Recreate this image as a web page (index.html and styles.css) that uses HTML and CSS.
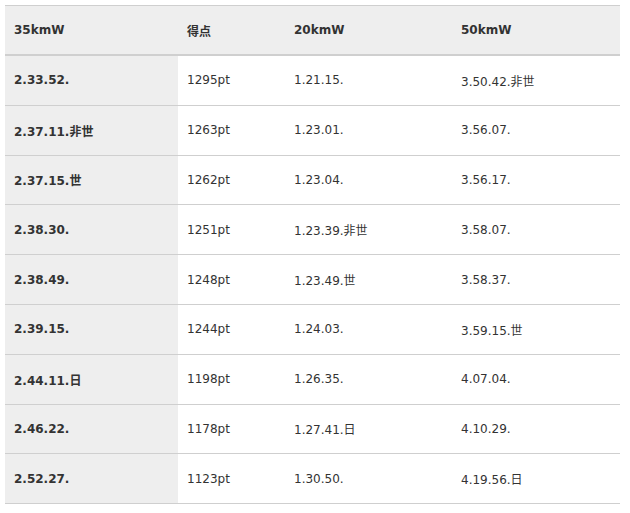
FILE: index.html
```html
<!DOCTYPE html>
<html lang="ja">
<head>
<meta charset="utf-8">
<title>記録表</title>
<link rel="stylesheet" href="styles.css">
</head>
<body>
<table class="records">
  <colgroup>
    <col class="c1"><col class="c2"><col class="c3"><col class="c4">
  </colgroup>
  <thead>
    <tr><th>35kmW</th><th>得点</th><th>20kmW</th><th>50kmW</th></tr>
  </thead>
  <tbody>
    <tr><th>2.33.52.</th><td>1295pt</td><td>1.21.15.</td><td>3.50.42.非世</td></tr>
    <tr><th>2.37.11.非世</th><td>1263pt</td><td>1.23.01.</td><td>3.56.07.</td></tr>
    <tr><th>2.37.15.世</th><td>1262pt</td><td>1.23.04.</td><td>3.56.17.</td></tr>
    <tr><th>2.38.30.</th><td>1251pt</td><td>1.23.39.非世</td><td>3.58.07.</td></tr>
    <tr><th>2.38.49.</th><td>1248pt</td><td>1.23.49.世</td><td>3.58.37.</td></tr>
    <tr><th>2.39.15.</th><td>1244pt</td><td>1.24.03.</td><td>3.59.15.世</td></tr>
    <tr><th>2.44.11.日</th><td>1198pt</td><td>1.26.35.</td><td>4.07.04.</td></tr>
    <tr><th>2.46.22.</th><td>1178pt</td><td>1.27.41.日</td><td>4.10.29.</td></tr>
    <tr><th>2.52.27.</th><td>1123pt</td><td>1.30.50.</td><td>4.19.56.日</td></tr>
  </tbody>
</table>
</body>
</html>
```

FILE: styles.css
```css
html, body {
  margin: 0;
  padding: 0;
  background: #fff;
}

body {
  padding: 5px 0 0 5px;
  font-family: "DejaVu Sans", Verdana, "Noto Sans CJK JP", sans-serif;
  font-size: 12px;
  color: #333;
}

.records {
  border-collapse: collapse;
  width: 615px;
  table-layout: fixed;
  border-top: 1px solid #cfcfcf;
}

.c1 { width: 173px; }
.c2 { width: 107px; }
.c3 { width: 167px; }
.c4 { width: 168px; }

.records th,
.records td {
  padding: 0 9px;
  text-align: left;
  vertical-align: middle;
  white-space: nowrap;
}

.records thead th {
  background: #eeeeee;
  font-weight: bold;
  height: 48px;
  border-bottom: 2px solid #cfcfcf;
}

.records tbody th,
.records tbody td {
  height: 48.8px;
  border-bottom: 1px solid #cfcfcf;
}

.records tbody th {
  background: #eeeeee;
  font-weight: bold;
}

.records tbody td {
  font-weight: normal;
}
```
